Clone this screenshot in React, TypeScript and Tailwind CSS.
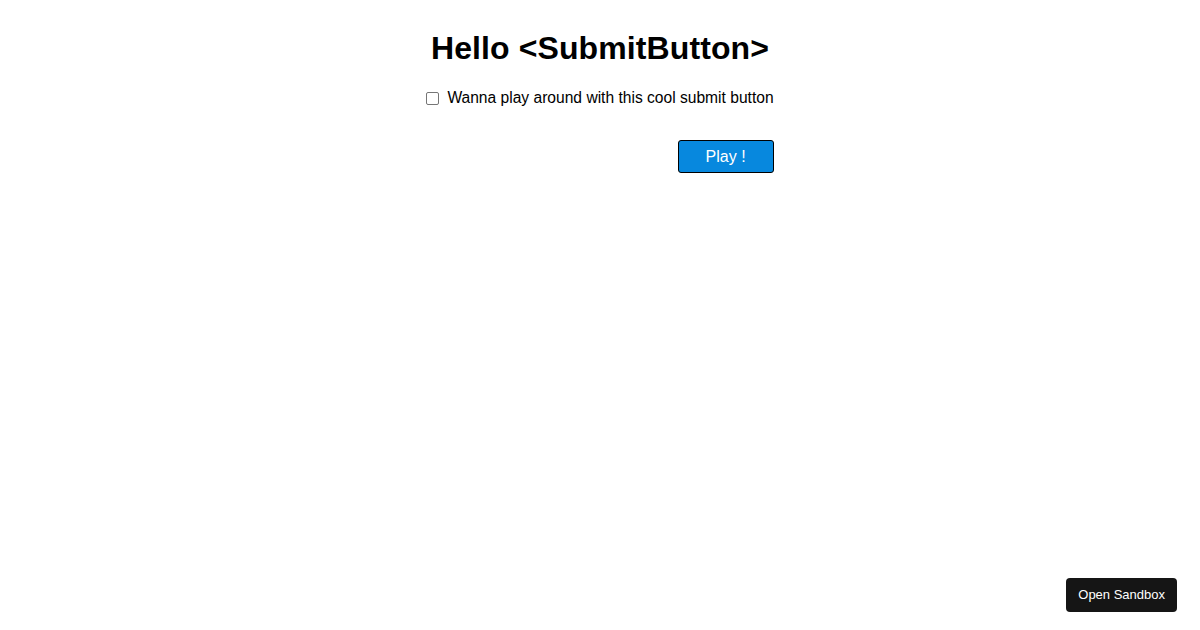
export default function App() {
  return (
    <div className="min-h-[630px] w-full bg-white text-black font-['Liberation_Sans',Arial,sans-serif]">
      <div className="flex flex-col items-center pt-[30px]">
        <h1 className="text-[32px] leading-[37px] font-bold tracking-[0.1px]">Hello &lt;SubmitButton&gt;</h1>
        <div className="mt-[22px] flex flex-col">
          <label className="flex items-center gap-[8px] text-[15.6px] leading-[18px]">
            <span className="w-[13px] h-[13px] rounded-[2px] border border-[#767676] bg-white" />
            <span>Wanna play around with this cool submit button</span>
          </label>
          <div className="mt-[33px] flex justify-end">
            <button className="w-[96px] h-[33px] rounded-[3px] border border-black bg-[#0788de] text-[16px] text-white">
              Play !
            </button>
          </div>
        </div>
      </div>
      <div className="fixed right-[23px] bottom-[18px] rounded-[4px] bg-[#151515] px-[12px] h-[34px] flex items-center text-[13px] text-white">
        Open Sandbox
      </div>
    </div>
  );
}
